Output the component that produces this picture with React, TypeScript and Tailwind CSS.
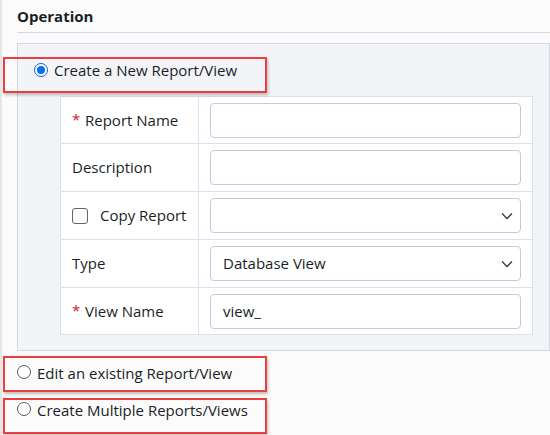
import React from "react";

const font = { fontFamily: '"Open Sans", "Noto Sans", sans-serif' };

function Chevron() {
  return (
    <svg width="12" height="8" viewBox="0 0 12 8" className="absolute right-[7px] top-1/2 -translate-y-1/2">
      <path d="M1 1.5 L6 6.5 L11 1.5" fill="none" stroke="#333a44" strokeWidth="1.3" />
    </svg>
  );
}

function Field({ value, select }: { value?: string; select?: boolean }) {
  return (
    <div className="relative h-[35px] w-full rounded-[4px] border border-[#c3ccd6] bg-white flex items-center pl-[12px] text-[15px] text-[#1a1f27]">
      {value}
      {select && <Chevron />}
    </div>
  );
}

function Req({ label }: { label: string }) {
  return (
    <div className="flex items-center">
      <span className="text-[#d4202a] text-[15px] w-[13px] -mt-[2px]">*</span>
      <span>{label}</span>
    </div>
  );
}

function Row({ label, children, h }: { label: React.ReactNode; children: React.ReactNode; h: string }) {
  return (
    <div className={`flex ${h}`}>
      <div className="w-[138px] border-r border-[#d8e1ec] flex items-center pl-[11px] text-[15px] text-[#1a1f27]">
        {label}
      </div>
      <div className="flex-1 flex items-center px-[11px]">{children}</div>
    </div>
  );
}

function Radio({ checked }: { checked?: boolean }) {
  return checked ? (
    <span className="w-[14px] h-[14px] rounded-full border-[1.5px] border-[#0b63e5] bg-white flex items-center justify-center shrink-0">
      <span className="w-[8px] h-[8px] rounded-full bg-[#0b6cf5]" />
    </span>
  ) : (
    <span className="w-[14px] h-[14px] rounded-full border border-[#555b63] bg-white shrink-0 -mt-[3px]" />
  );
}

export default function App() {
  return (
    <div style={font} className="relative w-[550px] h-[435px] overflow-hidden bg-[#fbfbfb] border-l-2 border-[#e6e6e6] text-[#1a1f27]">
      <div className="pl-[15px] pt-[5px]">
        <div className="text-[15px] font-bold h-[27px] leading-[22px]">Operation</div>
        <div className="h-px bg-[#dcd4e0]" />
        <div className="mt-[10px] border border-[#cfd8e2] bg-[#f3f4f8] pb-[15px]">
          <div className="h-[52px] flex items-center pl-[16px] gap-[6px] text-[15px]">
            <Radio checked />
            <span>Create a New Report/View</span>
          </div>
          <div className="ml-[42px] mr-[16px] border border-[#d8e1ec] bg-white divide-y divide-[#d8e1ec]">
            <Row h="h-[47px]" label={<Req label="Report Name" />}>
              <Field />
            </Row>
            <Row h="h-[48px]" label="Description">
              <Field />
            </Row>
            <Row
              h="h-[48px]"
              label={
                <div className="flex items-center">
                  <span className="w-[16px] h-[16px] rounded-[3px] border-[1.5px] border-[#5f656d] bg-white" />
                  <span className="ml-[12px]">Copy Report</span>
                </div>
              }
            >
              <Field select />
            </Row>
            <Row h="h-[48px]" label="Type">
              <Field value="Database View" select />
            </Row>
            <Row h="h-[46px]" label={<Req label="View Name" />}>
              <Field value="view_" />
            </Row>
          </div>
        </div>
        <div className="mt-[4px] h-[37px] flex items-center gap-[6px] text-[15px]">
          <Radio />
          <span>Edit an existing Report/View</span>
        </div>
        <div className="h-[37px] flex items-center gap-[6px] text-[15px]">
          <Radio />
          <span>Create Multiple Reports/Views</span>
        </div>
      </div>

      <div className="absolute left-[1px] top-[57px] w-[264px] h-[36px] border-2 border-[#ea3f40] shadow-[1px_2px_3px_rgba(0,0,0,0.25)]" />
      <div className="absolute left-[1px] top-[356px] w-[264px] h-[36px] border-2 border-[#ea3f40] shadow-[1px_2px_3px_rgba(0,0,0,0.25)]" />
      <div className="absolute left-[1px] top-[398px] w-[264px] h-[36px] border-2 border-[#ea3f40] shadow-[1px_2px_3px_rgba(0,0,0,0.25)]" />
    </div>
  );
}
